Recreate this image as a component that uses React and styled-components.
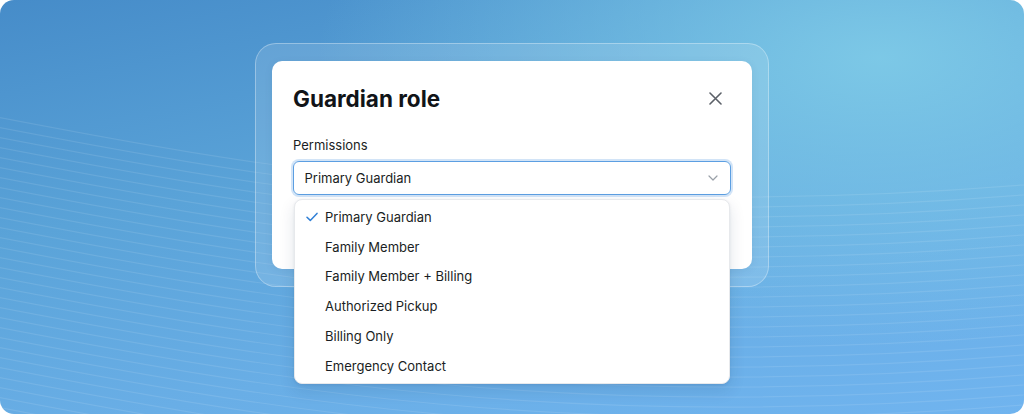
import React from "react";
import styled, { createGlobalStyle } from "styled-components";

const Global = createGlobalStyle`
  html, body { margin: 0; padding: 0; background: #ffffff; }
  body { font-family: Inter, "Noto Sans", "Liberation Sans", sans-serif; -webkit-font-smoothing: antialiased; }
  * { box-sizing: border-box; }
`;

const Page = styled.div`
  position: relative;
  width: 1024px;
  height: 414px;
  border-radius: 14px;
  overflow: hidden;
  background:
    radial-gradient(ellipse 55% 70% at 86% 14%, rgba(128, 204, 232, 0.9) 0%, rgba(128, 204, 232, 0) 100%),
    linear-gradient(168deg, #468cc9 0%, #5aa3d8 38%, #69aee6 70%, #70b4ef 100%);
  display: flex;
  justify-content: center;
  align-items: flex-start;
  padding-top: 43px;
`;

const Waves = styled.svg`
  position: absolute;
  inset: 0;
  pointer-events: none;
`;

const Glass = styled.div`
  position: relative;
  width: 514px;
  padding: 17px 16px;
  border-radius: 21px;
  background: rgba(255, 255, 255, 0.13);
  border: 1px solid rgba(255, 255, 255, 0.32);
`;

const Card = styled.div`
  position: relative;
  background: #ffffff;
  border-radius: 10px;
  padding: 21px 21px 74px;
  box-shadow: 0 2px 8px rgba(20, 60, 110, 0.08);
`;

const Header = styled.div`
  display: flex;
  align-items: center;
  justify-content: space-between;
  height: 32px;
`;

const Title = styled.h2`
  margin: 0;
  font-size: 22.5px;
  font-weight: 700;
  color: #111418;
`;

const CloseButton = styled.button`
  width: 32px;
  height: 32px;
  border: none;
  background: transparent;
  display: flex;
  align-items: center;
  justify-content: center;
  color: #5b6068;
  padding: 0;
`;

const Label = styled.div`
  margin-top: 21px;
  font-size: 13px;
  line-height: 20px;
  color: #1a1e23;
`;

const SelectWrap = styled.div`
  position: relative;
  margin-top: 6px;
`;

const Trigger = styled.div`
  height: 34px;
  border: 1.5px solid #5c9fe2;
  box-shadow: 0 0 0 2px rgba(92, 159, 226, 0.28);
  border-radius: 6px;
  display: flex;
  align-items: center;
  justify-content: space-between;
  padding: 0 12px 0 10.5px;
  font-size: 13px;
  color: #1a1e23;
`;

const Menu = styled.ul`
  position: absolute;
  left: 1px;
  right: 1px;
  top: calc(100% + 4px);
  margin: 0;
  padding: 2px 0 2px;
  list-style: none;
  background: #ffffff;
  border: 1px solid #e7e9ec;
  border-radius: 8px;
  box-shadow: 0 6px 16px rgba(15, 40, 80, 0.12), 0 1px 3px rgba(15, 40, 80, 0.08);
  z-index: 2;
`;

const Item = styled.li`
  position: relative;
  height: 29.8px;
  display: flex;
  align-items: center;
  padding-left: 30px;
  font-size: 13px;
  color: #1a1e23;
`;

const Check = styled.svg`
  position: absolute;
  left: 11px;
  top: 50%;
  transform: translateY(-50%);
`;

const options = [
  "Primary Guardian",
  "Family Member",
  "Family Member + Billing",
  "Authorized Pickup",
  "Billing Only",
  "Emergency Contact",
];

function WaveLines() {
  const lines = [];
  for (let i = 0; i < 34; i++) {
    const y = 110 + i * 10;
    lines.push(
      <path
        key={i}
        d={`M -40 ${y} C 220 ${y + 50}, 560 ${y + 120}, 1080 ${y + 70}`}
        fill="none"
        stroke="#ffffff"
        strokeOpacity={0.1}
        strokeWidth="1.2"
      />
    );
  }
  return (
    <Waves width="1024" height="414" viewBox="0 0 1024 414">
      {lines}
    </Waves>
  );
}

export default function App() {
  return (
    <>
      <Global />
      <Page>
        <WaveLines />
        <Glass>
          <Card>
            <Header>
              <Title>Guardian role</Title>
              <CloseButton aria-label="Close">
                <svg width="13" height="13" viewBox="0 0 13 13">
                  <path d="M1 1 L12 12 M12 1 L1 12" stroke="currentColor" strokeWidth="1.6" strokeLinecap="round" />
                </svg>
              </CloseButton>
            </Header>
            <Label>Permissions</Label>
            <SelectWrap>
              <Trigger>
                <span>Primary Guardian</span>
                <svg width="10" height="6" viewBox="0 0 10 6">
                  <path d="M1 1 L5 5 L9 1" fill="none" stroke="#9aa0a8" strokeWidth="1.2" strokeLinecap="round" strokeLinejoin="round" />
                </svg>
              </Trigger>
              <Menu>
                {options.map((o, i) => (
                  <Item key={o}>
                    {i === 0 && (
                      <Check width="12" height="10" viewBox="0 0 12 10">
                        <path d="M1 5.2 L4.3 8.4 L11 1.4" fill="none" stroke="#2f7fd6" strokeWidth="1.5" strokeLinecap="round" strokeLinejoin="round" />
                      </Check>
                    )}
                    {o}
                  </Item>
                ))}
              </Menu>
            </SelectWrap>
          </Card>
        </Glass>
      </Page>
    </>
  );
}
